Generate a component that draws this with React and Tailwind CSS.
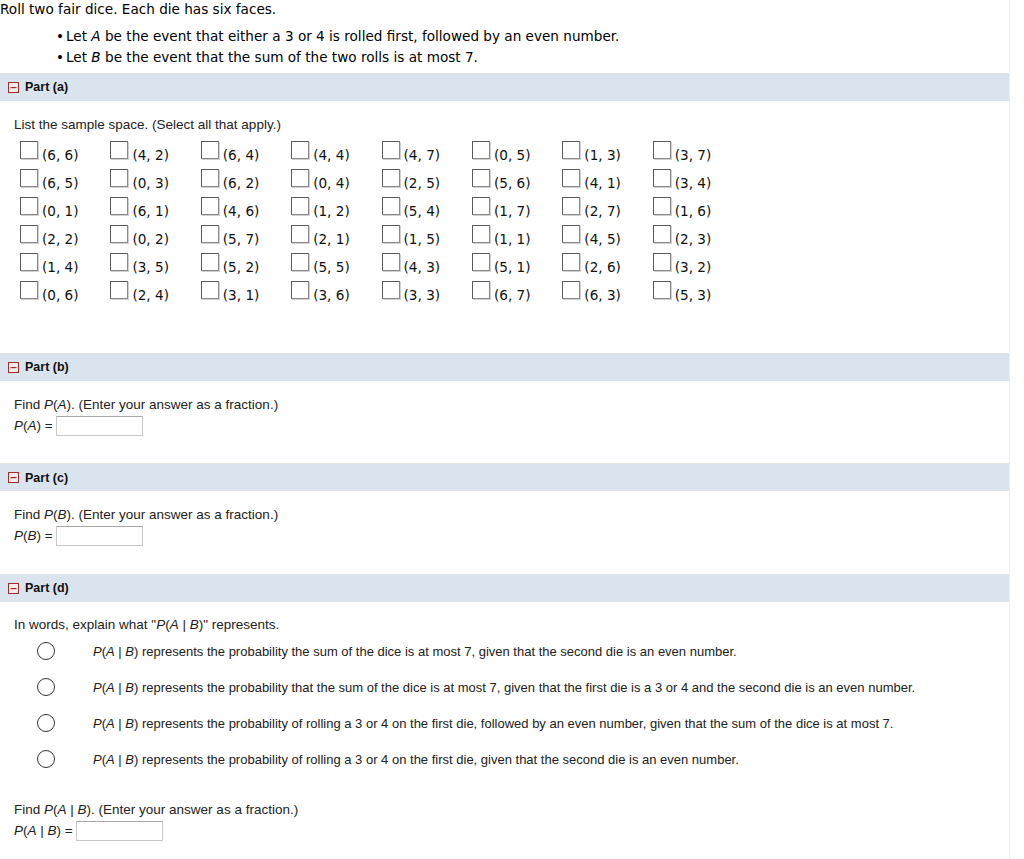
import React from "react";

const verdana = { fontFamily: '"DejaVu Sans", Verdana, sans-serif' };

const pairs = [
  ["(6, 6)", "(4, 2)", "(6, 4)", "(4, 4)", "(4, 7)", "(0, 5)", "(1, 3)", "(3, 7)"],
  ["(6, 5)", "(0, 3)", "(6, 2)", "(0, 4)", "(2, 5)", "(5, 6)", "(4, 1)", "(3, 4)"],
  ["(0, 1)", "(6, 1)", "(4, 6)", "(1, 2)", "(5, 4)", "(1, 7)", "(2, 7)", "(1, 6)"],
  ["(2, 2)", "(0, 2)", "(5, 7)", "(2, 1)", "(1, 5)", "(1, 1)", "(4, 5)", "(2, 3)"],
  ["(1, 4)", "(3, 5)", "(5, 2)", "(5, 5)", "(4, 3)", "(5, 1)", "(2, 6)", "(3, 2)"],
  ["(0, 6)", "(2, 4)", "(3, 1)", "(3, 6)", "(3, 3)", "(6, 7)", "(6, 3)", "(5, 3)"],
];

function PartHeader({ label }) {
  return (
    <div className="h-[28px] bg-[#d9e4ee] border-t border-[#e6e3df] flex items-center pl-[8px] gap-[6px]">
      <svg width="11" height="11" viewBox="0 0 11 11" className="shrink-0">
        <rect x="0.5" y="0.5" width="10" height="10" fill="#f6eaea" stroke="#a52a2a" strokeWidth="1" />
        <rect x="2.5" y="5" width="6" height="1.2" fill="#a52a2a" />
      </svg>
      <span className="text-[12.5px] font-bold text-[#111] leading-none">{label}</span>
    </div>
  );
}

function Input() {
  return <div className="w-[87px] h-[20px] border border-[#c8c8c8] border-t-[#a8a8a8] bg-white" />;
}

function I({ children }) {
  return <i>{children}</i>;
}

const options = [
  "represents the probability the sum of the dice is at most 7, given that the second die is an even number.",
  "represents the probability that the sum of the dice is at most 7, given that the first die is a 3 or 4 and the second die is an even number.",
  "represents the probability of rolling a 3 or 4 on the first die, followed by an even number, given that the sum of the dice is at most 7.",
  "represents the probability of rolling a 3 or 4 on the first die, given that the second die is an even number.",
];

export default function App() {
  return (
    <div
      className="w-[1010px] min-h-[859px] bg-white border-r border-[#eeeeee] text-[#222]"
      style={{ fontFamily: '"Liberation Sans", Arial, sans-serif' }}
    >
      <div className="text-[13.6px] leading-[18px] text-black" style={verdana}>
        Roll two fair dice. Each die has six faces.
      </div>
      <div className="mt-[8px] text-[13.6px] leading-[21px] text-black" style={verdana}>
        <div className="flex pl-[56px]">
          <span className="w-[10px]">•</span>
          <span>
            Let <I>A</I> be the event that either a 3 or 4 is rolled first, followed by an even number.
          </span>
        </div>
        <div className="flex pl-[56px]">
          <span className="w-[10px]">•</span>
          <span>
            Let <I>B</I> be the event that the sum of the two rolls is at most 7.
          </span>
        </div>
      </div>

      <div className="mt-[5px]">
        <PartHeader label="Part (a)" />
      </div>
      <div className="pl-[14px] mt-[16px] text-[13.5px] leading-[16px]">
        List the sample space. (Select all that apply.)
      </div>
      <div className="ml-[20px] mt-[8px] grid grid-cols-[repeat(8,90.4px)]">
        {pairs.flat().map((p, i) => (
          <div key={i} className="h-[28px] flex items-start">
            <div className="w-[18px] h-[18px] border border-[#5a5a5a] border-r-[#8a8a8a] border-b-[#8a8a8a] bg-white shadow-[1px_1px_0_#d0d0d0] shrink-0" />
            <span className="ml-[4px] mt-[6px] text-[13.6px] leading-[16px] text-[#111]" style={verdana}>
              {p}
            </span>
          </div>
        ))}
      </div>

      <div className="mt-[44px]">
        <PartHeader label="Part (b)" />
      </div>
      <div className="pl-[14px] mt-[16px] text-[13.5px] leading-[16px]">
        Find <I>P</I>(<I>A</I>). (Enter your answer as a fraction.)
      </div>
      <div className="pl-[14px] mt-[3px] flex items-center gap-[3px] text-[13.5px]">
        <span>
          <I>P</I>(<I>A</I>) =
        </span>
        <Input />
      </div>

      <div className="mt-[27px]">
        <PartHeader label="Part (c)" />
      </div>
      <div className="pl-[14px] mt-[16px] text-[13.5px] leading-[16px]">
        Find <I>P</I>(<I>B</I>). (Enter your answer as a fraction.)
      </div>
      <div className="pl-[14px] mt-[3px] flex items-center gap-[3px] text-[13.5px]">
        <span>
          <I>P</I>(<I>B</I>) =
        </span>
        <Input />
      </div>

      <div className="mt-[27px]">
        <PartHeader label="Part (d)" />
      </div>
      <div className="pl-[14px] mt-[15px] text-[13.5px] leading-[16px]">
        In words, explain what "<I>P</I>(<I>A</I> | <I>B</I>)" represents.
      </div>
      <div className="mt-0 flex flex-col">
        {options.map((t, i) => (
          <div key={i} className="h-[36px] flex items-center pl-[37px]">
            <div className="w-[18px] h-[18px] rounded-full border-[1.5px] border-[#333] bg-white shrink-0" />
            <span className="ml-[38px] text-[13px] leading-[16px] mt-[3px]">
              <I>P</I>(<I>A</I> | <I>B</I>) {t}
            </span>
          </div>
        ))}
      </div>

      <div className="pl-[14px] mt-[25px] text-[13.5px] leading-[16px]">
        Find <I>P</I>(<I>A</I> | <I>B</I>). (Enter your answer as a fraction.)
      </div>
      <div className="pl-[14px] mt-[3px] flex items-center gap-[3px] text-[13.5px]">
        <span>
          <I>P</I>(<I>A</I> | <I>B</I>) =
        </span>
        <Input />
      </div>
    </div>
  );
}
